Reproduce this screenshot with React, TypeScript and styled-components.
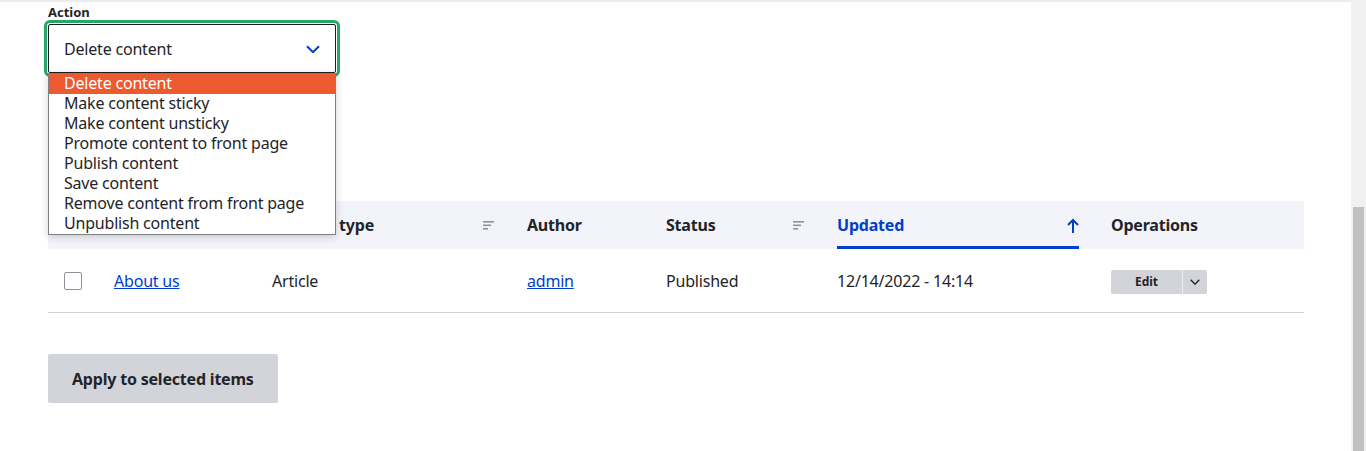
import React from "react";
import styled, { createGlobalStyle } from "styled-components";

const Global = createGlobalStyle`
  html, body { margin: 0; padding: 0; height: 100%; overflow: hidden; }
  body { font-family: "Noto Sans", "Open Sans", sans-serif; color: #232429; background: #fff; letter-spacing: -0.2px; }
  #root { height: 100%; }
`;

const Page = styled.div`
  display: flex;
  height: 451px;
`;

const Main = styled.main`
  flex: 1;
  border-top: 2px solid #ececec;
  padding: 2px 47px 0 48px;
  display: flex;
  flex-direction: column;
`;

const ScrollTrack = styled.div`
  width: 15px;
  background: #f1f1f1;
  display: flex;
  flex-direction: column;
  justify-content: flex-end;
  align-items: center;
`;

const ScrollThumb = styled.div`
  width: 11px;
  height: 244px;
  background: #c1c1c1;
`;

const Label = styled.div`
  font-size: 13px;
  font-weight: 700;
  line-height: 16px;
  height: 16px;
  letter-spacing: 0;
`;

const SelectWrap = styled.div`
  position: relative;
  width: 288px;
  margin-top: 4px;
`;

const Select = styled.div`
  height: 46px;
  border: 1px solid #1d1d22;
  border-radius: 2px;
  outline: 3px solid #26a769;
  outline-offset: 1px;
  display: flex;
  align-items: center;
  justify-content: space-between;
  padding: 1px 15px 0 15px;
  box-sizing: content-box;
  font-size: 16px;
  background: #fff;
`;

const Options = styled.ul`
  position: absolute;
  top: 49px;
  left: 0;
  width: 288px;
  box-sizing: border-box;
  margin: 0;
  padding: 0;
  list-style: none;
  background: #fff;
  border: 1px solid #7d7f86;
  box-shadow: 0 2px 8px rgba(0, 0, 0, 0.18);
  z-index: 5;
`;

const Option = styled.li<{ $active?: boolean }>`
  height: 20px;
  line-height: 19px;
  font-size: 16px;
  padding-left: 15px;
  white-space: nowrap;
  background: ${(p) => (p.$active ? "#ee5a2f" : "transparent")};
  color: ${(p) => (p.$active ? "#fff" : "#232429")};
`;

const Table = styled.div`
  margin-top: 128px;
  display: grid;
  grid-template-columns: 50px 158px 255px 139px 171px 274px 1fr;
`;

const HeadCell = styled.div<{ $active?: boolean }>`
  height: 48px;
  box-sizing: border-box;
  background: #f3f4f9;
  padding: 0 16px;
  display: flex;
  align-items: center;
  justify-content: space-between;
  font-size: 16px;
  font-weight: 700;
  color: ${(p) => (p.$active ? "#003ecc" : "#232429")};
  position: relative;
`;

const ActiveBar = styled.span`
  position: absolute;
  left: 16px;
  right: 16px;
  bottom: 0;
  height: 3px;
  background: #003ecc;
`;

const Cell = styled.div`
  height: 64px;
  box-sizing: border-box;
  border-bottom: 1px solid #d3d4d9;
  padding: 0 16px;
  display: flex;
  align-items: center;
  font-size: 16px;
  color: #232429;
`;

const Checkbox = styled.span`
  width: 18px;
  height: 18px;
  box-sizing: border-box;
  border: 1px solid #8e929c;
  border-radius: 2px;
  background: #fff;
`;

const Link = styled.a`
  color: #003ecc;
  text-decoration: underline;
`;

const OpGroup = styled.div`
  display: flex;
  height: 24px;
  margin-top: 2px;
  border-radius: 2px;
  overflow: hidden;
  background: #d3d4d9;
`;

const OpMain = styled.span`
  width: 71px;
  display: flex;
  align-items: center;
  justify-content: center;
  font-size: 12px;
  font-weight: 700;
  letter-spacing: 0;
  border-right: 1px solid #eeeef1;
`;

const OpToggle = styled.span`
  width: 24px;
  display: flex;
  align-items: center;
  justify-content: center;
`;

const ApplyButton = styled.button`
  align-self: flex-start;
  margin-top: 41px;
  height: 49px;
  padding: 0 24px;
  border: 0;
  border-radius: 2px;
  background: #d3d4d9;
  font-family: inherit;
  letter-spacing: -0.2px;
  font-size: 16px;
  font-weight: 700;
  color: #232429;
`;

const SortIcon = () => (
  <svg width="12" height="10" viewBox="0 0 12 10">
    <g fill="#8e929c">
      <rect x="0" y="1" width="11" height="1.6" />
      <rect x="0" y="4.5" width="8" height="1.6" />
      <rect x="0" y="8" width="5" height="1.6" />
    </g>
  </svg>
);

const Chevron = ({ color, w }: { color: string; w: number }) => (
  <svg width={w} height={w * 0.6} viewBox="0 0 14 8">
    <path d="M1 1l6 6 6-6" fill="none" stroke={color} strokeWidth="2" />
  </svg>
);

const options = [
  "Delete content",
  "Make content sticky",
  "Make content unsticky",
  "Promote content to front page",
  "Publish content",
  "Save content",
  "Remove content from front page",
  "Unpublish content",
];

export default function App() {
  return (
    <Page>
      <Global />
      <Main>
        <Label>Action</Label>
        <SelectWrap>
          <Select>
            <span>Delete content</span>
            <Chevron color="#003ecc" w={14} />
          </Select>
          <Options>
            {options.map((o, i) => (
              <Option key={o} $active={i === 0}>
                {o}
              </Option>
            ))}
          </Options>
        </SelectWrap>
        <Table>
          <HeadCell />
          <HeadCell>Title</HeadCell>
          <HeadCell>
            <span>Content type</span>
            <SortIcon />
          </HeadCell>
          <HeadCell>Author</HeadCell>
          <HeadCell>
            <span>Status</span>
            <SortIcon />
          </HeadCell>
          <HeadCell $active>
            <span>Updated</span>
            <svg width="12" height="15" viewBox="0 0 12 15">
              <path d="M6 15V2M1 7l5-5 5 5" fill="none" stroke="#003ecc" strokeWidth="2" />
            </svg>
            <ActiveBar />
          </HeadCell>
          <HeadCell>Operations</HeadCell>

          <Cell>
            <Checkbox />
          </Cell>
          <Cell>
            <Link href="#">About us</Link>
          </Cell>
          <Cell>Article</Cell>
          <Cell>
            <Link href="#">admin</Link>
          </Cell>
          <Cell>Published</Cell>
          <Cell>12/14/2022 - 14:14</Cell>
          <Cell>
            <OpGroup>
              <OpMain>Edit</OpMain>
              <OpToggle>
                <Chevron color="#232429" w={10} />
              </OpToggle>
            </OpGroup>
          </Cell>
        </Table>
        <ApplyButton>Apply to selected items</ApplyButton>
      </Main>
      <ScrollTrack>
        <ScrollThumb />
      </ScrollTrack>
    </Page>
  );
}
